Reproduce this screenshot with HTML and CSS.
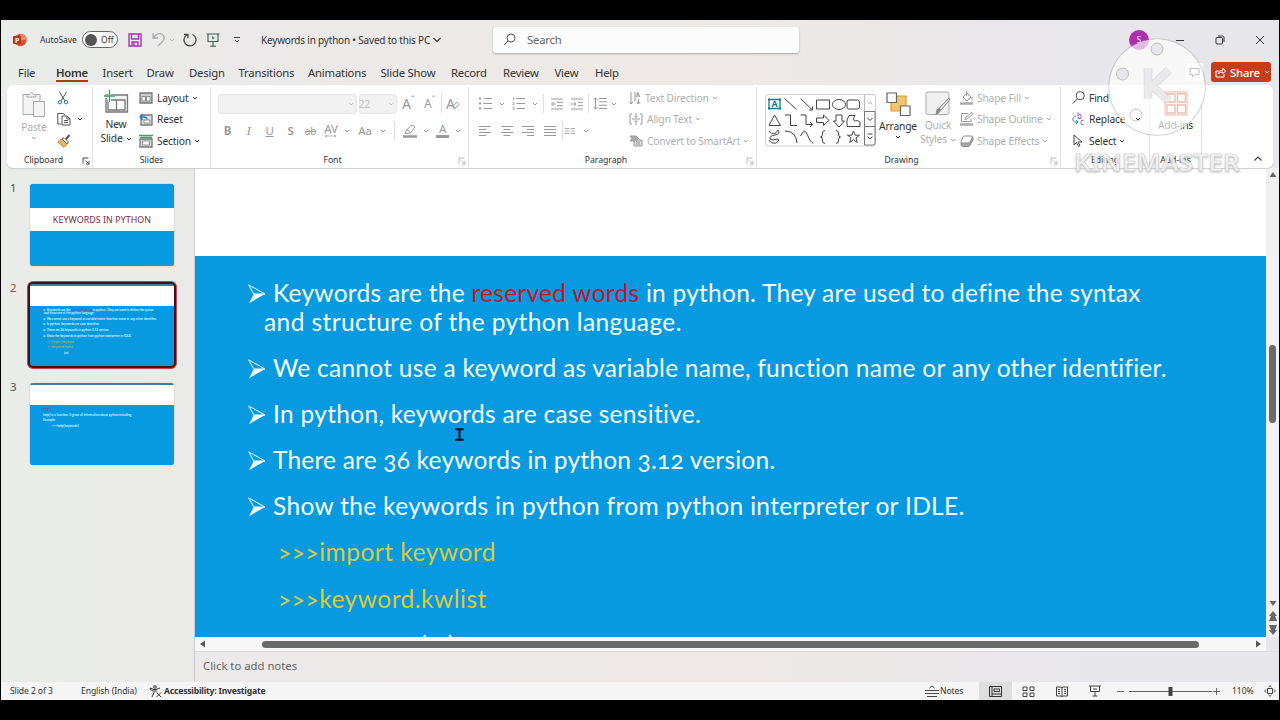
FILE: index.html
```html
<!DOCTYPE html>
<html lang="en">
<head>
  <meta charset="UTF-8" />
  <meta name="viewport" content="width=device-width, initial-scale=1.0" />
  <title>Keywords in python</title>
  <link rel="stylesheet" href="styles.css">
</head>
<body>
  <svg class="defs" width="0" height="0">
    <symbol id="chev" viewBox="0 0 6 6"><path d="M1 2l2 2 2-2" fill="none" stroke="currentColor"/></symbol>
    <symbol id="launch" viewBox="0 0 8 8"><path d="M1 6.500V1h5.500M3.500 3.500L7 7M7 4v3H4" fill="none" stroke="currentColor" stroke-width=".9"/></symbol>
    <symbol id="arrow" viewBox="0 0 18 20"><path d="M.7.900L17 10H5.800z" fill="none" stroke="currentColor"/><path d="M17 10L1 19.200 5.800 10z" fill="currentColor"/></symbol>
  </svg>

  <div class="window">
    <header class="titlebar">
      <svg class="logo" width="14" height="14" viewBox="0 0 14 14"><circle cx="7.500" cy="7" r="6.200" fill="#d9532f"/><path d="M7.500.800a6.200 6.200 0 0 1 6.200 6.200H7.500z" fill="#f08a6a"/><rect x="0" y="3" width="8" height="8" rx="1" fill="#b9331a"/><text x="2" y="9.600" class="logo-letter">P</text></svg>
      <span class="autosave">AutoSave</span>
      <span class="toggle"><i></i>Off</span>
      <svg class="save" width="14" height="14" viewBox="0 0 14 14" fill="none" stroke="#a535ae" stroke-width="1.400"><path d="M1 1h12v12H1zM3.500 1v5h7V1M4 13V9h6v4M6 9v4"/></svg>
      <svg class="undo" width="14" height="15" viewBox="0 0 14 15" fill="none" stroke="#aaa" stroke-width="1.300"><path d="M1 1v5h5M1.500 5.500C4 2 8 .5 10.500 2.500s2 5 0 7L6 14"/></svg>
      <svg class="undo-more" width="6" height="6"><use href="#chev"/></svg>
      <svg class="redo" width="14" height="14" viewBox="0 0 14 14" fill="none" stroke="#444" stroke-width="1.200"><path d="M9.500 1.500A6 6 0 1 1 4.500 1.500M1 1.300h4v4"/></svg>
      <svg class="show" width="14" height="14" viewBox="0 0 14 14" fill="none" stroke="#3f5c50" stroke-width="1.100"><path d="M.5 1h13M2 1v7.500h10V1M7 8.500v5M4 13.300h6"/><path d="M6 3l3 1.700L6 6.500z" fill="#3a9a65" stroke="none"/></svg>
      <svg class="qat" width="8" height="8" viewBox="0 0 8 8" fill="none" stroke="#444"><path d="M1 1.500h6M2 4l2 2 2-2"/></svg>
      <span class="doc">Keywords in python • Saved to this PC</span>
      <svg class="doc-more" width="10" height="8" viewBox="0 0 10 8" fill="none" stroke="#333" stroke-width="1.100"><path d="M1.500 2L5 5.500 8.500 2"/></svg>
      <div class="search">
        <svg width="13" height="13" viewBox="0 0 13 13" fill="none" stroke="#555"><circle cx="8" cy="5" r="4"/><path d="M5 8L1 12"/></svg>
        <span>Search</span>
      </div>
      <span class="avatar">S</span>
      <svg class="min" width="10" height="10" viewBox="0 0 10 10" stroke="#333"><path d="M1 5.500h8"/></svg>
      <svg class="max" width="10" height="10" viewBox="0 0 10 10" fill="none" stroke="#333"><rect x="1" y="2.500" width="6.500" height="6.500" rx="1"/><path d="M3 1h4.500q1.500 0 1.500 1.500V7"/></svg>
      <svg class="close" width="10" height="10" viewBox="0 0 10 10" fill="none" stroke="#333"><path d="M1 1l8 8M9 1L1 9"/></svg>
    </header>

    <nav class="tabs">
      <span>File</span><span class="active">Home</span><span>Insert</span><span>Draw</span><span>Design</span><span>Transitions</span><span>Animations</span><span>Slide Show</span><span>Record</span><span>Review</span><span>View</span><span>Help</span>
      <span class="comment"><svg width="11" height="11" viewBox="0 0 11 11" fill="none" stroke="#444"><path d="M1 1.500h9v6H6L3.500 10V7.500H1z"/></svg></span>
      <span class="share"><svg width="11" height="11" viewBox="0 0 11 11" fill="none" stroke="#fff"><path d="M4 4H1v6h8V7M3 7q1-4 5-4V1l2.500 3L8 6.500V5Q5 5 3 7z"/></svg>Share<svg width="6" height="6"><use href="#chev"/></svg></span>
    </nav>

    <section class="ribbon">
      <div class="group clipboard">
        <div class="body">
          <div class="big off paste">
            <svg width="24" height="27" viewBox="0 0 24 27" fill="#f3f3f3" stroke="#aaa"><path d="M1 3.500h17v20H1z"/><path d="M5 6V3.500h2.500q2-4 4 0H14V6z"/><path d="M11.500 10.500h11v15h-11z"/></svg>
            <span>Paste</span>
            <svg width="6" height="6"><use href="#chev"/></svg>
          </div>
          <div class="rows">
            <div class="row"><svg width="12" height="14" viewBox="0 0 12 14" fill="none" stroke="#555"><path d="M2.500 1L8 10M9.500 1L4 10"/><circle cx="3" cy="11.200" r="1.700" stroke="#2b7cb8"/><circle cx="9" cy="11.200" r="1.700" stroke="#2b7cb8"/></svg></div>
            <div class="row"><svg width="14" height="14" viewBox="0 0 14 14" fill="none" stroke="#555"><path d="M4 12H.8V1.500h5.500L8 3M5 4h5l3 3v6H5zM10 4v3h3M7 8.500h4M7 10.500h4"/></svg><svg class="c" width="6" height="6"><use href="#chev"/></svg></div>
            <div class="row"><svg width="14" height="14" viewBox="0 0 14 14"><path d="M1 8l4-3 5 5-3 3.300z" fill="#f0b75c" stroke="#c68020"/><path d="M5 5l2-1.500 4.500 4.500L10 10z" fill="#fff" stroke="#555"/><path d="M9 5l3.500-4" stroke="#555" stroke-width="2"/></svg></div>
          </div>
        </div>
        <div class="caption">Clipboard<svg class="corner" width="8" height="8"><use href="#launch"/></svg></div>
      </div>

      <div class="group slides">
        <div class="body">
          <div class="big new">
            <svg width="26" height="26" viewBox="0 0 26 26" fill="#f2f2f2" stroke="#777" stroke-width="1.300"><path d="M3 5h21.500v17H3z"/><path d="M5 10h17v10H5zM13.500 10v10" fill="#fff"/><path d="M6.500 1v11M1 6.500h11" stroke="#fff" stroke-width="3"/><path d="M6.500 0v12M1 6h11" stroke="#3a9a65"/></svg>
            <span>New</span>
            <span>Slide<svg width="6" height="6"><use href="#chev"/></svg></span>
          </div>
          <div class="rows">
            <div class="row"><svg width="14" height="12" viewBox="0 0 14 12" fill="#fff" stroke="#777" stroke-width="1.300"><path d="M1 1h12v10H1z" fill="#ccc"/><path d="M3 4.500h3.500V9H3zM7.500 4.500H11V9H7.500z" stroke-width=".8"/></svg><span>Layout</span><svg class="c" width="6" height="6"><use href="#chev"/></svg></div>
            <div class="row"><svg width="14" height="13" viewBox="0 0 14 13" fill="#fff" stroke="#777" stroke-width="1.300"><path d="M2 2h11v10H2z" fill="#e4e4e4"/><path d="M5 7h6v3H5z" stroke-width=".8"/><path d="M1 4h4q3 0 3 2.500M4 1L1 4l3 3" fill="none" stroke="#2b7cb8"/></svg><span>Reset</span></div>
            <div class="row"><svg width="14" height="14" viewBox="0 0 14 14" fill="#ddd" stroke="#777" stroke-width="1.300"><path d="M1 5h12v8H1z"/><path d="M3.500 7h7v4h-7z" fill="#fff" stroke-width=".8"/><path d="M0 1.500h14M1 3.500h12" stroke="#4c9a72"/></svg><span>Section</span><svg class="c" width="6" height="6"><use href="#chev"/></svg></div>
          </div>
        </div>
        <div class="caption">Slides</div>
      </div>

      <div class="group font">
        <div class="lines">
          <div class="line">
            <span class="field name"><svg width="6" height="6"><use href="#chev"/></svg></span>
            <span class="field size">22<svg width="6" height="6"><use href="#chev"/></svg></span>
            <span class="grow">A<sup>ˆ</sup></span>
            <span class="shrink">A<sup>ˇ</sup></span>
            <i class="bar"></i>
            <span class="clear">A<svg width="8" height="8" viewBox="0 0 8 8" fill="#fff" stroke="#999"><path d="M1 5l3.500-4L7 3.500 4 7H2.500z"/></svg></span>
          </div>
          <div class="line letters">
            <b>B</b><em>I</em><u>U</u><b class="shadow">S</b><s>ab</s>
            <span class="av">AV<svg width="13" height="4" viewBox="0 0 13 4" fill="none" stroke="#aaa" stroke-width=".8"><path d="M1 2h11M3 .5L1 2l2 1.500M10 .5L12 2l-2 1.500"/></svg></span><svg width="6" height="6"><use href="#chev"/></svg>
            <span>Aa</span><svg width="6" height="6"><use href="#chev"/></svg>
            <i class="bar"></i>
            <svg width="14" height="14" viewBox="0 0 14 14" fill="none" stroke="#999"><path d="M2 9.500l2-4L9 1l3 2-4 5.500-4 1zM4 5.500l3.500 3"/><path d="M0 12.500h14" stroke-width="2.500"/></svg><svg width="6" height="6"><use href="#chev"/></svg>
            <span class="color">A</span><svg width="6" height="6"><use href="#chev"/></svg>
          </div>
        </div>
        <div class="caption">Font<svg class="corner off" width="8" height="8"><use href="#launch"/></svg></div>
      </div>

      <div class="group paragraph">
        <div class="body">
          <div class="lines">
            <div class="line lists">
              <svg width="13" height="13" viewBox="0 0 13 13" stroke="#999"><path d="M4.500 1.500H13M4.500 6.500H13M4.500 11.500H13"/><path d="M0 1.500h2M0 6.500h2M0 11.500h2" stroke-width="2"/></svg><svg width="6" height="6"><use href="#chev"/></svg>
              <svg width="13" height="13" viewBox="0 0 13 13" stroke="#999" fill="none"><path d="M4.500 1.500H13M4.500 6.500H13M4.500 11.500H13"/><path d="M1.500 0v3M.5 5.500h1.500v2H.5M.5 10h1.500v3H.5" stroke-width=".8"/></svg><svg width="6" height="6"><use href="#chev"/></svg>
              <i class="bar"></i>
              <svg width="12" height="12" viewBox="0 0 12 12" stroke="#999" fill="none"><path d="M0 1h12M6 4.300h6M6 7.700h6M0 11h12M5 6H.5M2.500 4l-2 2 2 2"/></svg>
              <svg width="12" height="12" viewBox="0 0 12 12" stroke="#999" fill="none"><path d="M0 1h12M7 4.300h5M7 7.700h5M0 11h12M0 6h5M3 4l2 2-2 2"/></svg>
              <i class="bar"></i>
              <svg width="14" height="13" viewBox="0 0 14 13" stroke="#999" fill="none"><path d="M6 1.500h8M6 4.800h8M6 8.200h8M6 11.500h8M2.500 1v11M.5 3l2-2 2 2M.5 10l2 2 2-2"/></svg><svg width="6" height="6"><use href="#chev"/></svg>
            </div>
            <div class="line aligns">
              <svg width="12" height="12" viewBox="0 0 12 12" stroke="#999"><path d="M0 1.500h12M0 4.500h7M0 7.500h12M0 10.500h7"/></svg>
              <svg width="12" height="12" viewBox="0 0 12 12" stroke="#999"><path d="M0 1.500h12M2.500 4.500h7M0 7.500h12M2.500 10.500h7"/></svg>
              <svg width="12" height="12" viewBox="0 0 12 12" stroke="#999"><path d="M0 1.500h12M5 4.500h7M0 7.500h12M5 10.500h7"/></svg>
              <svg width="12" height="12" viewBox="0 0 12 12" stroke="#999"><path d="M0 1.500h12M0 4.500h12M0 7.500h12M0 10.500h12"/></svg>
              <i class="bar"></i>
              <svg width="10" height="8" viewBox="0 0 10 8" stroke="#aaa"><path d="M0 1.500h4.300M0 4h4.300M0 6.500h4.300M5.700 1.500H10M5.700 4H10M5.700 6.500H10"/></svg><svg width="6" height="6"><use href="#chev"/></svg>
            </div>
          </div>
          <div class="rows off">
            <div class="row"><svg width="12" height="14" viewBox="0 0 12 14" stroke="#999" fill="none"><path d="M2 1v12M0 10.500L2 13l2-2.500M6 1v9M9 6V1.500L7.500 3M7 6l2-4 2 4M9.500 8v5M7.800 11l1.700 2 1.700-2"/></svg><span>Text Direction</span><svg class="c" width="6" height="6"><use href="#chev"/></svg></div>
            <div class="row"><svg width="14" height="12" viewBox="0 0 14 12" stroke="#999" fill="none"><path d="M3 1H1v10h2M11 1h2v10h-2M3 6h8M7 0v4M5.500 3L7 4.500 8.500 3M7 12V8M5.500 9L7 7.500 8.500 9"/></svg><span>Align Text</span><svg class="c" width="6" height="6"><use href="#chev"/></svg></div>
            <div class="row"><svg width="14" height="12" viewBox="0 0 14 12" stroke="#999" fill="#ddd"><path d="M1 1h6l2.500 2.500L7 6H1l2-2.500z" fill="#aaa"/><path d="M5 5h8v6H5zM7 7h4M7 9h4"/></svg><span>Convert to SmartArt</span><svg class="c" width="6" height="6"><use href="#chev"/></svg></div>
          </div>
        </div>
        <div class="caption">Paragraph<svg class="corner off" width="8" height="8"><use href="#launch"/></svg></div>
      </div>

      <div class="group drawing">
        <div class="body">
          <svg class="gallery" width="111" height="53" viewBox="0 0 111 53" fill="none" stroke="#444">
            <rect x=".5" y=".5" width="110" height="51.500" rx="2.500" stroke="#ccc"/>
            <path d="M99.500 1v50" stroke="#bbb"/>
            <path d="M99.500 17.500h10.500v15H99.500zM99.500 32.500h10.500V49q0 2-2 2h-8.500z" stroke="#777"/>
            <path d="M103 10l2-2 2 2" stroke="#bbb"/><path d="M102.500 24l2.500 2.500 2.500-2.500M102.500 40h5M102.500 42.500l2.500 2.500 2.500-2.500"/>
            <path d="M4 5.500h11v9H4z" stroke="#2a7094" stroke-width="1.300"/><path d="M3 4.500h2v2H3zM14 4.500h2v2h-2zM3 13.500h2v2H3zM14 13.500h2v2h-2z" fill="#2a7094" stroke="none"/><text x="6.600" y="13.300" class="glyph">A</text>
            <path d="M19.500 4.500l12 11M35.500 4.500l11.500 11M47.500 12.500v3.500H44M51.500 6h13v9h-13zM84 6h8.500q2 0 2 2v5q0 2-2 2H84q-2 0-2-2V8q0-2 2-2z"/><ellipse cx="74" cy="10.500" rx="6.500" ry="5"/>
            <path d="M9.500 21L4 31.500h11.500zM20 21h5.500v10.500H32M35.500 21H41v9.500h6.500M45 28l2.500 2.500L45 33M51.500 24h7v-3l5.500 5.300-5.500 5.200v-3h-7zM71 21h6v6h2.500L74 33l-5.500-6H71zM84 21.500h6q-3 4.500 0 5.500 2-1.500 5 1v4.500H82V26z"/>
            <path d="M4 37q5 6 9-1 3 4-3 5t-5 4q3 2 7 0 4 0-1 4-5 1-7-3M20 37q11 0 12 12M35.500 42q4-9 7-1t6 8M60 36.500q-3 0-2.500 3.500 0 3-2 3 2 0 2 3-.5 3.500 2.500 3.500M71 36.500q3 0 2.500 3.500 0 3 2 3-2 0-2 3 .5 3.500-2.500 3.500M88.500 37l1.600 4.200h4.400l-3.500 2.800 1.300 4.500-3.800-2.700-3.800 2.700L86 44l-3.500-2.800h4.400z"/>
          </svg>
          <div class="big arrange">
            <svg width="25" height="26" viewBox="0 0 25 26" stroke="#666" fill="#fff" stroke-width="1.200"><path d="M5 5h15v15H5z" fill="#f5c46b" stroke="#d89a35"/><path d="M1 2h9.500v9.500H1zM14.500 15H24v9.500h-9.500z"/></svg>
            <span>Arrange</span>
            <svg width="6" height="6"><use href="#chev"/></svg>
          </div>
          <div class="big off quick">
            <svg width="26" height="26" viewBox="0 0 26 26" stroke="#aaa" fill="#f0f0f0"><rect x="1" y="2" width="23" height="22.500" rx="2"/><path d="M24.500 10L16 20l-2-1.500L24 8z" fill="#eee" stroke="#888"/><path d="M14 18q-3 1-3 4t-2.500 2.500q5 1 7.500-4.500z" fill="#888" stroke="none"/></svg>
            <span>Quick</span>
            <span>Styles<svg width="6" height="6"><use href="#chev"/></svg></span>
          </div>
          <div class="rows off">
            <div class="row"><svg width="14" height="14" viewBox="0 0 14 14" stroke="#999" fill="none"><path d="M3 6l4-4 4 4-4 4zM6.500 0v5M12 6v3"/><path d="M0 12.500h13" stroke-width="2.500" stroke="#aaa"/></svg><span>Shape Fill</span><svg class="c" width="6" height="6"><use href="#chev"/></svg></div>
            <div class="row"><svg width="14" height="14" viewBox="0 0 14 14" stroke="#999" fill="none"><path d="M8 1.500H1.500v8H11V7M5 7.500l1-2.500L12 .5l1.200 1.500L7 7z"/><path d="M0 12.500h13" stroke-width="2.500" stroke="#aaa"/></svg><span>Shape Outline</span><svg class="c" width="6" height="6"><use href="#chev"/></svg></div>
            <div class="row"><svg width="14" height="12" viewBox="0 0 14 12" stroke="#888" fill="#aaa"><path d="M1 8v2l2 1.500h6L13 5V2z"/><path d="M4.500 1H11q2 0 1.500 1.500L10 7Q9.500 8 8 8H2.500Q.5 8 1 7l2-5q.5-1 1.500-1z" fill="#fff"/></svg><span>Shape Effects</span><svg class="c" width="6" height="6"><use href="#chev"/></svg></div>
          </div>
        </div>
        <div class="caption">Drawing<svg class="corner off" width="8" height="8"><use href="#launch"/></svg></div>
      </div>

      <div class="group editing">
        <div class="rows">
          <div class="row"><svg width="13" height="13" viewBox="0 0 13 13" fill="none" stroke="#444"><circle cx="8.300" cy="4.700" r="4"/><path d="M5.500 7.700L.7 12.500"/></svg><span>Find</span></div>
          <div class="row"><svg class="rep" width="13" height="14" viewBox="0 0 13 14" fill="none" stroke="#2b87b8"><path d="M4 4Q0 5 1 8.500 2 11 6 10M4 8l2 2-2 2"/><text x="5" y="6.500" class="rep-b">b</text><text x="8" y="12.500" class="rep-c">c</text></svg><span>Replace</span><svg class="c far" width="6" height="6"><use href="#chev"/></svg></div>
          <div class="row"><svg width="13" height="13" viewBox="0 0 13 13" fill="none" stroke="#444"><path d="M2 1v10l2.500-2.500 2 4 1.500-1-2-3.500H10z"/></svg><span>Select</span><svg class="c" width="6" height="6"><use href="#chev"/></svg></div>
        </div>
        <div class="caption">Editing</div>
      </div>

      <div class="group addins">
        <div class="body">
          <div class="big">
            <svg width="24" height="25" viewBox="0 0 24 25" fill="#fff" stroke="#c04a20" stroke-width="1.400"><path d="M1 1h22v23H1z" fill="#fbe9e2" stroke="#d97a55"/><path d="M3 3h8v8H3zM13.500 3h8v8h-8zM3 14h8v8H3zM13.500 14h8v8h-8z"/></svg>
            <span>Add-ins</span>
          </div>
        </div>
        <div class="caption">Add-ins</div>
      </div>
      <svg class="collapse" width="10" height="8" viewBox="0 0 10 8" fill="none" stroke="#444" stroke-width="1.200"><path d="M1.500 5.500L5 2l3.500 3.500"/></svg>
    </section>

    <main class="work">
      <aside class="thumbs">
        <div class="item">
          <span class="num">1</span>
          <div class="thumb cover"><h2>KEYWORDS IN PYTHON</h2></div>
        </div>
        <div class="item">
          <span class="num current">2</span>
          <div class="thumb selected">
            <div class="head"></div>
            <div class="mini">
              <p>➤ Keywords are the <em>reserved words</em> in python. They are used to define the syntax<br>&nbsp;and structure of the python language.</p>
              <p>➤ We cannot use a keyword as variable name, function name or any other identifier.</p>
              <p>➤ In python, keywords are case sensitive.</p>
              <p>➤ There are 36 keywords in python 3.12 version.</p>
              <p>➤ Show the keywords in python from python interpreter or IDLE.</p>
              <p class="code">&gt;&gt;&gt;import keyword</p>
              <p class="code">&gt;&gt;&gt;keyword.kwlist</p>
              <p class="or">(or)</p>
            </div>
          </div>
        </div>
        <div class="item">
          <span class="num">3</span>
          <div class="thumb third">
            <div class="head"></div>
            <div class="mini">
              <p><em>help()</em></p>
              <p>help() is a function. It gives all information about python including</p>
              <p>Example:</p>
              <p class="call">&gt;&gt;&gt;help('keywords')</p>
            </div>
          </div>
        </div>
      </aside>

      <div class="editor">
        <div class="canvas">
          <div class="slide">
            <div class="content">
              <p><svg width="18" height="20"><use href="#arrow"/></svg><span class="l1">Keywords are the <em>reserved words</em> in python. They are used to define the syntax</span><br><span class="l2">and structure of the python language.</span></p>
              <p><svg width="18" height="20"><use href="#arrow"/></svg><span class="l3">We cannot use a keyword as variable name, function name or any other identifier.</span></p>
              <p><svg width="18" height="20"><use href="#arrow"/></svg><span class="l4">In python, keywords are case sensitive.</span></p>
              <p><svg width="18" height="20"><use href="#arrow"/></svg><span class="l5">There are 36 keywords in python 3.12 version.</span></p>
              <p><svg width="18" height="20"><use href="#arrow"/></svg><span class="l6">Show the keywords in python from python interpreter or IDLE.</span></p>
              <p class="code"><span class="l7">&gt;&gt;&gt;import keyword</span></p>
              <p class="code"><span class="l7">&gt;&gt;&gt;keyword.kwlist</span></p>
              <p class="or">(or)</p>
            </div>
          </div>
          <div class="vscroll">
            <svg width="10" height="8" viewBox="0 0 10 8" fill="#666"><path d="M5 1l3.500 5h-7z"/></svg>
            <i></i>
            <svg class="down" width="10" height="38" viewBox="0 0 10 38" fill="#666"><path d="M1.500 2h7L5 7zM5 12l4 5H7l2 5H1l2-5H1zM5 36l4-5H7l2-5H1l2 5H1z"/></svg>
          </div>
        </div>
        <div class="hscroll">
          <svg width="7" height="8" viewBox="0 0 7 8" fill="#555"><path d="M6 .5v7L1 4z"/></svg>
          <i></i>
          <svg class="right" width="7" height="8" viewBox="0 0 7 8" fill="#555"><path d="M1 .5v7L6 4z"/></svg>
        </div>
        <div class="notes">Click to add notes</div>
      </div>
    </main>

    <footer class="status">
      <span class="count">Slide 2 of 3</span>
      <span class="lang">English (India)</span>
      <svg class="acc" width="13" height="13" viewBox="0 0 13 13" fill="none" stroke="#333"><circle cx="6" cy="2" r="1.300"/><path d="M1 3l4 1.500h2L11 3M5 4.500v3L3 12M7 4.500v2.500M7.500 7.500l4.500 4.500M12 7.500L7.500 12M1 3l.5 1.500L4 6"/></svg>
      <b>Accessibility: Investigate</b>
      <svg class="notes-ic" width="14" height="12" viewBox="0 0 14 12" fill="none" stroke="#444"><path d="M0 5.500h14M0 8.500h14M2 11.500h10M4.500 3L7 .8 9.500 3"/></svg>
      <span class="notes-label">Notes</span>
      <span class="view on"><svg width="13" height="11" viewBox="0 0 13 11" fill="none" stroke="#333"><path d="M.5.500h12v10H.5zM3 .5v10M3 8h9"/><path d="M5 3h5.500v2.500H5z"/></svg></span>
      <span class="view"><svg width="13" height="11" viewBox="0 0 13 11" fill="none" stroke="#444"><path d="M1 1h4v3.500H1zM8 1h4v3.500H8zM1 7h4v3.500H1zM8 7h4v3.500H8z"/></svg></span>
      <span class="view"><svg width="12" height="11" viewBox="0 0 12 11" fill="none" stroke="#444"><path d="M.5 1H5l1 1 1-1h4.500v9H7l-1 .8L5 10H.5zM6 2v8M2 3.500h2M2 5.500h2M2 7.500h2M8 3.500h2M8 5.500h2M8 7.500h2"/></svg></span>
      <span class="view"><svg width="12" height="12" viewBox="0 0 12 12" fill="none" stroke="#444"><path d="M0 1h12M1.500 1v5.500h9V1M4 4h4M6 6.500V11M3.500 11h5"/></svg></span>
      <svg class="zoom" width="103" height="10" viewBox="0 0 103 10" stroke="#666"><path d="M0 5.500h7M12 5.500h83M96 5.500h7M99.500 2v7"/><path d="M53.500 1v9" stroke="#444" stroke-width="4"/></svg>
      <span class="percent">110%</span>
      <svg class="fit" width="12" height="12" viewBox="0 0 12 12" fill="none" stroke="#444"><path d="M3.500 3.500h5v5h-5zM4.500 2L6 .7 7.500 2M4.500 10L6 11.300 7.500 10M2 4.500L.7 6 2 7.500M10 4.500L11.300 6 10 7.500"/></svg>
    </footer>

    <svg class="ibeam" width="9" height="13" viewBox="0 0 9 13" stroke="#0a0f18" stroke-width="2"><path d="M.5 1.200h8M4.500 1v11M.5 11.800h8"/></svg>

    <svg class="watermark" width="176" height="146" viewBox="0 0 176 146">
      <defs>
        <mask id="cut">
          <circle cx="87" cy="53" r="48" fill="#fff"/>
          <circle cx="87" cy="15" r="6"/><circle cx="52.500" cy="40" r="6"/><circle cx="66" cy="81" r="6"/>
        </mask>
      </defs>
      <circle cx="87" cy="53" r="48" fill="none" stroke="#8885" stroke-width="1.500"/>
      <circle cx="87" cy="53" r="48" fill="#fff" fill-opacity=".66" mask="url(#cut)"/>
      <g fill="none" stroke="#999" stroke-opacity=".55"><circle cx="87" cy="15" r="6"/><circle cx="52.500" cy="40" r="6"/><circle cx="66" cy="81" r="6"/></g>
      <path d="M78 34v31M99 36L82 52l17 15" class="mark-edge"/>
      <path d="M78 34v31M99 36L82 52l17 15" class="mark"/>
      <text x="4" y="137" textLength="166" lengthAdjust="spacingAndGlyphs">KINEMASTER</text>
    </svg>
  </div>
</body>
</html>
```

FILE: styles.css
```css
* {
  box-sizing: border-box;
}

body {
  margin: 0;
  height: 720px;
  background: #000;
  padding: 20px 1px;
  overflow: hidden;
  font-family: "Noto Sans", "Open Sans", sans-serif;
  color: #333;
}

.defs {
  position: absolute;
}

svg {
  flex: none;
}

.window {
  position: relative;
  height: 680px;
  display: flex;
  flex-direction: column;
  background: linear-gradient(90deg, #e9ece9 0, #ebe9e9 20%, #eee9e6 55%, #e7e6ea 85%, #e7e6ea 100%);
  white-space: nowrap;
}

/* title bar */
.titlebar {
  display: flex;
  align-items: center;
  height: 39px;
  padding-left: 12px;
}

.logo-letter {
  font-size: 7px;
  font-weight: 700;
  fill: #fff;
}

.autosave {
  width: 42px;
  margin-left: 13px;
  font-size: 8.5px;
  letter-spacing: -0.1px;
}

.toggle {
  display: flex;
  align-items: center;
  gap: 4px;
  width: 36px;
  height: 17px;
  padding-left: 2px;
  border: 1px solid #666;
  border-radius: 9px;
  background: #fff;
  font-size: 8.5px;
}

.toggle i {
  width: 12px;
  height: 12px;
  border-radius: 50%;
  background: #555;
}

.save { margin-left: 10px; }
.undo { margin-left: 10px; }
.undo-more { margin-left: 3px; color: #bbb; }
.redo { margin-left: 8px; }
.show { margin-left: 9px; }
.qat { margin-left: 13px; }

.doc {
  width: 170px;
  margin-left: 20px;
  font-size: 10px;
  letter-spacing: -0.2px;
}

.doc-more {
  margin-left: 1px;
}

.search {
  display: flex;
  align-items: center;
  gap: 11px;
  width: 306px;
  height: 26px;
  margin-left: 51px;
  padding-left: 10px;
  border-radius: 3px;
  background: #fcfcfc;
  box-shadow: 0 1px 2px #aaa;
  font-size: 11.3px;
  letter-spacing: -0.2px;
  color: #666;
}

.avatar {
  width: 20px;
  height: 20px;
  margin-left: 330px;
  border-radius: 50%;
  background: #b02fb0;
  color: #fff;
  font-size: 8px;
  line-height: 20px;
  text-align: center;
}

.min { margin-left: 26px; }
.max { margin-left: 30px; }
.close { margin-left: 30px; }

/* tabs */
.tabs {
  display: grid;
  grid-template-columns: 38px 46.5px 44px 42.5px 49.5px 69.5px 72.5px 70.5px 52px 51.5px 40.5px 591px 25px 60px;
  align-items: center;
  height: 26px;
  padding-left: 17px;
  font-size: 11.3px;
  letter-spacing: -0.2px;
}

.tabs .active {
  position: relative;
  width: 32px;
  font-weight: 600;
  letter-spacing: -0.3px;
}

.tabs .active::after {
  content: '';
  position: absolute;
  left: 0;
  right: 0;
  bottom: -2px;
  height: 2px;
  background: #a83a20;
}

.tabs .comment {
  display: flex;
  align-items: center;
  justify-content: center;
  width: 17px;
  height: 18px;
  border-radius: 2px;
  background: #fff;
}

.tabs .share {
  display: flex;
  align-items: center;
  gap: 4px;
  height: 20px;
  padding-left: 4px;
  border-radius: 3px;
  background: #c43e1c;
  color: #fff;
  font-weight: 500;
}

/* ribbon */
.ribbon {
  position: relative;
  display: flex;
  flex: none;
  height: 83px;
  margin: 0 6px;
  border-radius: 6px;
  background: #fff;
  box-shadow: 0 1px 1px #ccc;
  font-size: 10.3px;
  letter-spacing: -0.2px;
  z-index: 1;
}

.group {
  display: flex;
  flex-direction: column;
  flex: none;
  height: 81px;
  margin-top: 2px;
  border-right: 1px solid #e2e2e2;
}

.body {
  display: flex;
}

.caption {
  position: relative;
  margin-top: auto;
  height: 14px;
  font-size: 8.7px;
  line-height: 13px;
  text-align: center;
  letter-spacing: -0.05px;
}

.corner {
  position: absolute;
  right: 2px;
  top: 3px;
}

.off {
  color: #b0b0b0;
}

.big {
  display: flex;
  flex-direction: column;
  align-items: center;
  line-height: 13.5px;
}

.big > span svg {
  margin-left: 3px;
}

.rows {
  display: flex;
  flex-direction: column;
}

.row {
  display: flex;
  align-items: center;
  height: 21.5px;
}

.row span {
  margin-left: 4px;
}

.row .c {
  margin-left: 3px;
}

.row .far {
  margin-left: 10px;
}

.lines {
  display: flex;
  flex-direction: column;
  padding-top: 3px;
}

.line {
  display: flex;
  align-items: center;
  height: 27px;
  color: #999;
}

.bar {
  width: 1px;
  height: 19px;
  background: #ddd;
}

.clipboard { width: 86px; }
.clipboard .paste { width: 26px; margin: 4px 10px 0 14px; }
.clipboard .paste svg + span { margin-top: 3px; }
.clipboard .row .c { margin-left: 6px; }
.clipboard .caption { padding-right: 12px; }

.slides { width: 118px; }
.slides .new { width: 32px; margin: 3px 7px 0 7px; }
.slides .new svg + span { margin-top: 2px; }

.font { width: 258px; padding-left: 8px; }
.font .caption { margin-left: -8px; padding-right: 14px; }

.field {
  display: flex;
  align-items: center;
  justify-content: flex-end;
  height: 20px;
  padding-right: 2px;
  border: 1px solid #e6e6e6;
  border-radius: 3px;
  background: #f1f1f1;
  color: #c0c0c0;
}

.field.name { width: 139px; margin-left: -1px; }
.field.size { width: 38px; margin-left: 2px; gap: 18px; }

.grow,
.shrink,
.clear {
  font-size: 14px;
  line-height: 20px;
}

.grow { width: 22px; margin-left: 5px; }
.shrink { width: 17px; font-size: 12px; }
.clear { margin-left: 4px; }
.clear svg { margin-left: -3px; }
.grow sup,
.shrink sup { font-size: 9px; line-height: 0; }

.letters {
  display: grid;
  grid-template-columns: 21px 21px 21px 21px 19px 22px 10px 26px 10px 12px 19px 14px 19px 11px;
  margin-left: -2px;
  font-size: 11.5px;
}

.letters > * {
  justify-self: center;
}

.letters em { font-family: "Liberation Serif", serif; font-size: 13px; }
.letters s { font-size: 10px; }
.letters .shadow { font-weight: 600; }

.av {
  display: flex;
  flex-direction: column;
  align-items: center;
  line-height: 11px;
}

.color {
  width: 13px;
  line-height: 12px;
  text-align: center;
  border-bottom: 3px solid #999;
}

.paragraph { width: 288px; }
.paragraph .lines { width: 160px; padding-left: 10px; }
.paragraph .caption { padding-right: 13px; }

.lists {
  display: grid;
  grid-template-columns: 15px 15px 19px 13px 5px 22px 18px 4px 19px 9px;
}

.aligns {
  display: grid;
  grid-template-columns: 21.5px 21.5px 21.5px 16px 5px 18px 9px;
}

.lists > *,
.aligns > * {
  justify-self: center;
}

.lists > :first-child,
.aligns > svg {
  justify-self: start;
}

.drawing { width: 304px; }
.gallery { margin: 7px 0 0 8px; }
.arrange { width: 40px; margin: 4px 0 0 2px; }
.arrange svg + span { margin-top: 3px; }
.quick { width: 36px; margin: 3px 0 0 2px; }
.quick svg + span { margin-top: 3px; }
.drawing .rows { margin-left: 4px; }
.drawing .row span { margin-left: 3px; }
.drawing .caption { padding-right: 14px; }

.editing { width: 89px; }
.editing .rows { padding-left: 11px; }
.rep { overflow: visible; }
.rep-b,
.rep-c { font-size: 8px; fill: #9b3fa5; stroke: none; }
.rep-c { fill: #2b87b8; }

.glyph {
  font-size: 9px;
  font-weight: 700;
  fill: #2a7094;
  stroke: none;
}

.addins { width: 52px; }
.addins .big { width: 52px; margin-top: 4px; }
.addins .big span { margin-top: 3px; }

.collapse {
  align-self: flex-end;
  margin: 0 10px 5px auto;
}

/* workspace */
.work {
  display: flex;
  height: 514px;
}

.thumbs {
  width: 194px;
  padding-top: 16px;
  border-right: 1px solid #ccc;
}

.item {
  display: flex;
  height: 99.5px;
}

.num {
  width: 29px;
  padding-left: 9px;
  margin-top: -4px;
  font-size: 11.5px;
  color: #555;
}

.num.current {
  color: #b5442c;
}

.thumb {
  width: 144px;
  height: 82px;
  border-radius: 3px;
  background: #089ae0;
  box-shadow: 0 0 1px #777;
  overflow: hidden;
}

.cover {
  padding-top: 24px;
}

.cover h2 {
  margin: 0;
  height: 23px;
  background: #fff;
  color: #7f2748;
  font-size: 8.9px;
  font-weight: 400;
  line-height: 24px;
  text-align: center;
  letter-spacing: 0.05px;
}

.selected {
  outline: 2px solid #45101d;
  box-shadow: 0 0 0 3px #b24a50;
}

.head {
  height: 22px;
  border-top: 2px solid #3c7fae;
  background: #fff;
}

.mini {
  padding: 3px 0 0 13px;
  font-family: Lato, sans-serif;
  font-size: 3.050px;
  font-weight: 700;
  line-height: 3.600px;
  color: #d5f2ff;
}

.mini p { margin: 0 0 2.100px; }
.mini em { font-style: normal; color: #8a4a8c; }
.mini .code { padding-left: 4px; color: #9cb86a; }
.mini .or { padding-left: 21px; }
.mini .call { padding-left: 9px; }

.editor {
  width: 1084px;
  display: flex;
  flex-direction: column;
}

.canvas {
  display: flex;
  height: 469px;
}

.slide {
  width: 1071px;
  padding-top: 88px;
  background: #fff;
  overflow: hidden;
}

.content {
  height: 381px;
  padding: 22px 0 0 69px;
  overflow: hidden;
  background: #089ae0;
  color: #f4fdff;
  font-family: Lato, "Noto Sans", sans-serif;
  font-size: 24.5px;
  line-height: 29px;
  font-variant-numeric: oldstyle-nums;
}

.content p {
  margin: 0 0 17.100px;
  text-indent: -16px;
}

.content p svg {
  margin-right: 7px;
  vertical-align: -2px;
}

.content em {
  font-style: normal;
  color: #c01730;
}

/* tracking of each text line */
.l1 { letter-spacing: 0.26px; }
.l2 { letter-spacing: 0.4px; }
.l3 { letter-spacing: 0.27px; }
.l4 { letter-spacing: 0.3px; }
.l5 { letter-spacing: 0.2px; }
.l6 { letter-spacing: 0.33px; }
.l7 { letter-spacing: 0.5px; }

.content .code {
  padding-left: 30px;
  color: #dcc93f;
}

.content .or {
  padding-left: 172px;
}

.vscroll {
  display: flex;
  flex-direction: column;
  align-items: center;
  width: 13px;
  padding-top: 3px;
  background: #f1f1f2;
}

.vscroll i {
  width: 7px;
  height: 78px;
  margin-top: 166px;
  border-radius: 4px;
  background: #6a6a6a;
}

.vscroll .down {
  margin-top: auto;
}

.hscroll {
  display: flex;
  align-items: center;
  height: 14px;
  width: 1071px;
  padding: 0 4px;
  background: #f7f7f7;
}

.hscroll i {
  width: 937px;
  height: 7px;
  margin-left: 56px;
  border-radius: 4px;
  background: #6a6a6a;
}

.hscroll .right {
  margin-left: auto;
}

.notes {
  height: 31px;
  padding-left: 8px;
  border-top: 1px solid #ddd;
  font-size: 11.3px;
  line-height: 28px;
  letter-spacing: 0;
  color: #666;
}

/* status bar */
.status {
  display: flex;
  align-items: center;
  height: 18px;
  padding-left: 9px;
  background: #f5f5f5;
  font-size: 8.6px;
  letter-spacing: -0.1px;
}

.count { width: 71px; }
.lang { width: 68px; }
.status b { width: 103px; margin-left: 2px; letter-spacing: -0.2px; }
.notes-ic { margin-left: 658px; }
.notes-label { width: 39px; margin-left: 1px; }

.view {
  display: flex;
  align-items: center;
  justify-content: center;
  width: 33px;
  height: 18px;
}

.view.on { background: #dedede; }
.zoom { margin-left: 6px; }
.percent { width: 32px; margin-left: 12px; }

/* pointer and recorder badge sit above the window */
.ibeam {
  position: absolute;
  left: 454px;
  top: 408px;
}

.watermark {
  position: absolute;
  left: 1069px;
  top: 14px;
  z-index: 2;
}

.mark,
.mark-edge {
  fill: none;
  stroke: #eeeef0;
  stroke-width: 7;
  stroke-opacity: 0.8;
}

.mark-edge {
  stroke: #aaa;
  stroke-width: 8.5;
  stroke-opacity: 0.4;
}

.watermark text {
  font-size: 23px;
  font-weight: 600;
  fill: #fff;
  fill-opacity: 0.7;
  stroke: #ccc;
  stroke-width: 0.4;
  filter: drop-shadow(0 1px 1px #aaa);
}
```
